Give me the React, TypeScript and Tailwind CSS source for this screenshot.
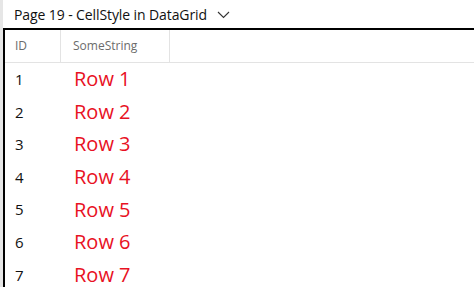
import React from 'react';

const rows = [1, 2, 3, 4, 5, 6, 7];

const App: React.FC = () => {
  return (
    <div
      className="flex h-[287px] w-[474px] overflow-hidden bg-white"
      style={{ fontFamily: '"Open Sans", "Noto Sans", sans-serif' }}
    >
      <div className="w-[3px] shrink-0 bg-[#e6e6e6]" />
      <div className="flex min-w-0 flex-1 flex-col">
        {/* title bar */}
        <div className="flex h-[28px] shrink-0 items-center pl-[11px] text-[14px] tracking-[-0.1px] text-[#111]">
          <span>Page 19 - CellStyle in DataGrid</span>
          <svg className="ml-[10px] mt-[1px]" width="13" height="8" viewBox="0 0 13 8" fill="none">
            <path d="M1 1l5.5 5.5L12 1" stroke="#333" strokeWidth="1.1" />
          </svg>
        </div>

        {/* grid */}
        <div className="flex-1 border-l-2 border-t-2 border-black">
          <div className="flex h-[33px] border-b border-[#e3e3e3] text-[12px] text-[#6b6b6b]">
            <div className="flex w-[56px] items-center border-r border-[#e3e3e3] pl-[10px]">ID</div>
            <div className="flex w-[109px] items-center border-r border-[#e3e3e3] pl-[12px]">SomeString</div>
          </div>
          {rows.map((n) => (
            <div key={n} className="flex h-[32.6px] items-center">
              <div className="w-[56px] pl-[10px] text-[15px] text-[#111]">{n}</div>
              <div className="pl-[13px] text-[20px] text-[#e81123]">Row {n}</div>
            </div>
          ))}
        </div>
      </div>
    </div>
  );
};

export default App;
